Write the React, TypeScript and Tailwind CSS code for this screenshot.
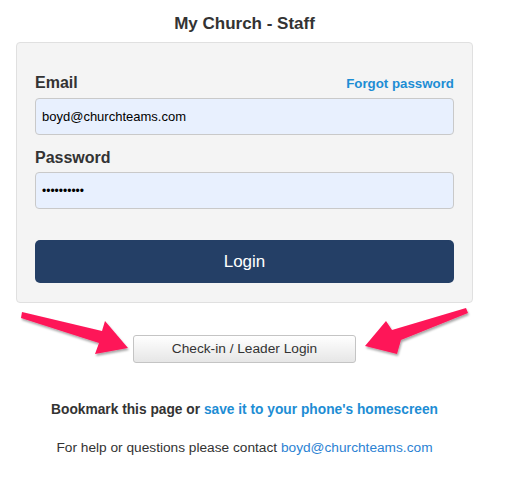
import React from "react";

const Arrows = () => {
  return (
    <svg
      className="absolute left-0 top-0 pointer-events-none"
      width="528"
      height="488"
      viewBox="0 0 528 488"
    >
      <defs>
        <filter id="arrowShadow" x="-20%" y="-20%" width="140%" height="160%">
          <feDropShadow dx="1" dy="2" stdDeviation="1.2" floodColor="#000" floodOpacity="0.35" />
        </filter>
      </defs>
      <g fill="#fe1659" filter="url(#arrowShadow)">
        <path d="M22 312 L102 331 L105 321 L128 348 L95 354 L99 343 L21 318 Z" />
        <path d="M466 308 L468 313 L401 340 L397 354 L365 346 L386 321 L392 330 Z" />
      </g>
    </svg>
  );
};

export default function App() {
  return (
    <div className="relative w-[528px] h-[488px] bg-white font-['Liberation_Sans',Arial,sans-serif] text-[#333]">
      <div className="ml-[16px] w-[457px] pt-[14px] flex flex-col items-center">
        <h1 className="text-[17px] leading-[20px] font-bold">My Church - Staff</h1>

        <div className="mt-[8px] w-full bg-[#f4f4f4] border border-[#e0e0e0] rounded-[4px] px-[18px] pt-[30px] pb-[19px]">
          <div className="flex items-baseline justify-between">
            <label className="text-[16px] leading-[20px] font-bold">Email</label>
            <a className="text-[13.3px] leading-[20px] font-bold text-[#1d8dd4]">Forgot password</a>
          </div>
          <input
            readOnly
            value="boyd@churchteams.com"
            className="mt-[4px] w-full h-[37px] px-[6px] text-[13px] text-black bg-[#e8f0fe] border border-[#c9c9c9] rounded-[4px] outline-none"
          />

          <label className="block mt-[13px] text-[16px] leading-[20px] font-bold">Password</label>
          <input
            readOnly
            value="••••••••••"
            className="mt-[4px] w-full h-[37px] px-[6px] text-[12px] text-black bg-[#e8f0fe] border border-[#c9c9c9] rounded-[4px] outline-none"
          />

          <button className="mt-[31px] w-full h-[43px] bg-[#243f66] rounded-[5px] text-white text-[17px]">
            Login
          </button>
        </div>

        <button className="mt-[32px] w-[223px] h-[28px] border border-[#c4c4c4] rounded-[3px] bg-gradient-to-b from-white to-[#e6e6e6] text-[13.7px] text-[#333]">
          Check-in / Leader Login
        </button>

        <p className="mt-[38px] text-[13.75px] leading-[18px] font-bold">
          Bookmark this page or <a className="text-[#1d8dd4]">save it to your phone's homescreen</a>
        </p>

        <p className="mt-[19px] text-[13.7px] leading-[20px] text-[#333]">
          For help or questions please contact <a className="text-[#2b82d3]">boyd@churchteams.com</a>
        </p>
      </div>
      <Arrows />
    </div>
  );
}
